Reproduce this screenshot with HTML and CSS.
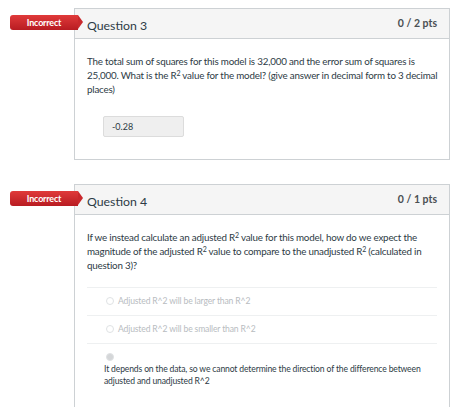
FILE: index.html
```html
<!DOCTYPE html>
<html lang="en">
<head>
    <meta charset="UTF-8">
    <title>Quiz Results</title>
    <link rel="stylesheet" href="styles.css">
</head>
<body>
    <div class="question">
        <div class="badge">Incorrect</div>
        <div class="question-header">
            <span class="question-title">Question 3</span>
            <span class="question-points">0 / 2 pts</span>
        </div>
        <div class="question-body">
            <p class="question-text">The total sum of squares for this model is 32,000 and the error sum of squares is<br>25,000. What is the R<sup>2</sup> value for the model? (give answer in decimal form to 3 decimal places)</p>
            <div class="answer-box">-0.28</div>
        </div>
    </div>

    <div class="question">
        <div class="badge">Incorrect</div>
        <div class="question-header">
            <span class="question-title">Question 4</span>
            <span class="question-points">0 / 1 pts</span>
        </div>
        <div class="question-body">
            <p class="question-text">If we instead calculate an adjusted R<sup>2</sup> value for this model, how do we expect the magnitude of the adjusted R<sup>2</sup> value to compare to the unadjusted R<sup>2</sup> (calculated in question 3)?</p>
            <div class="answers">
                <div class="answer faded">
                    <span class="radio"></span>
                    <span>Adjusted R^2 will be larger than R^2</span>
                </div>
                <div class="answer faded">
                    <span class="radio"></span>
                    <span>Adjusted R^2 will be smaller than R^2</span>
                </div>
                <div class="answer selected">
                    <span class="radio checked"></span>
                    <span class="answer-label">It depends on the data, so we cannot determine the direction of the difference between adjusted and unadjusted R^2</span>
                </div>
            </div>
        </div>
    </div>
</body>
</html>
```

FILE: styles.css
```css
body {
    margin: 0;
    padding: 8px 0 0 0;
    background: #fff;
    color: #2d3b45;
    font-family: Lato, 'Noto Sans', sans-serif;
}
.question {
    position: relative;
    margin-left: 74px;
    width: 374px;
    border: 1px solid #cdd1d4;
    margin-bottom: 24px;
}
.badge {
    position: absolute;
    left: -65px;
    top: 6px;
    width: 68px;
    height: 15px;
    background: linear-gradient(#e03a3a, #b81c22);
    border-radius: 3px 0 0 3px;
    color: #fff;
    font-size: 9px;
    font-weight: bold;
    line-height: 15px;
    text-align: center;
    letter-spacing: -0.2px;
}
.badge::after {
    content: '';
    position: absolute;
    right: -5px;
    top: 0;
    border-top: 7.5px solid transparent;
    border-bottom: 7.5px solid transparent;
    border-left: 5px solid #c9282c;
}
.question-header {
    display: flex;
    justify-content: space-between;
    align-items: center;
    height: 29px;
    padding: 0 12px;
    background: #f5f5f5;
    border-bottom: 1px solid #cdd1d4;
}
.question-title {
    font-size: 12.3px;
    margin-top: 4px;
}
.question-points {
    font-size: 10.5px;
    font-weight: bold;
    color: #4a4f53;
    margin-top: -2px;
}
.question-body {
    padding: 16px 3px 22px 12px;
}
.question-text {
    margin: 0;
    font-size: 9.8px;
    letter-spacing: -0.2px;
    line-height: 13.8px;
}
.question-text sup {
    font-size: 7px;
    line-height: 0;
    vertical-align: 3px;
}
.answer-box {
    margin: 20px 0 0 16px;
    width: 81px;
    height: 21px;
    padding-left: 8px;
    background: #efefef;
    border: 1px solid #dcdcdc;
    border-radius: 2px;
    font-size: 9px;
    line-height: 19px;
    box-sizing: border-box;
}
.answers {
    margin-top: 14px;
    margin-right: 9px;
}
.answer {
    display: flex;
    align-items: center;
    gap: 4px;
    border-top: 1px solid #eef0f1;
    padding: 0 0 0 19px;
    height: 27px;
    font-size: 8.6px;
    letter-spacing: -0.15px;
}
.answer.faded {
    color: #b8bcbf;
}
.answer.selected {
    flex-direction: column;
    align-items: flex-start;
    height: auto;
    gap: 2px;
    padding: 9px 0 20px 17px;
    line-height: 12px;
    color: #2d3b45;
}
.radio {
    width: 6px;
    height: 6px;
    border: 1px solid #dfe2e4;
    border-radius: 50%;
    flex-shrink: 0;
}
.radio.checked {
    margin-left: 2px;
    background: #d4d6d8;
    border-color: #e0e2e4;
}
```
